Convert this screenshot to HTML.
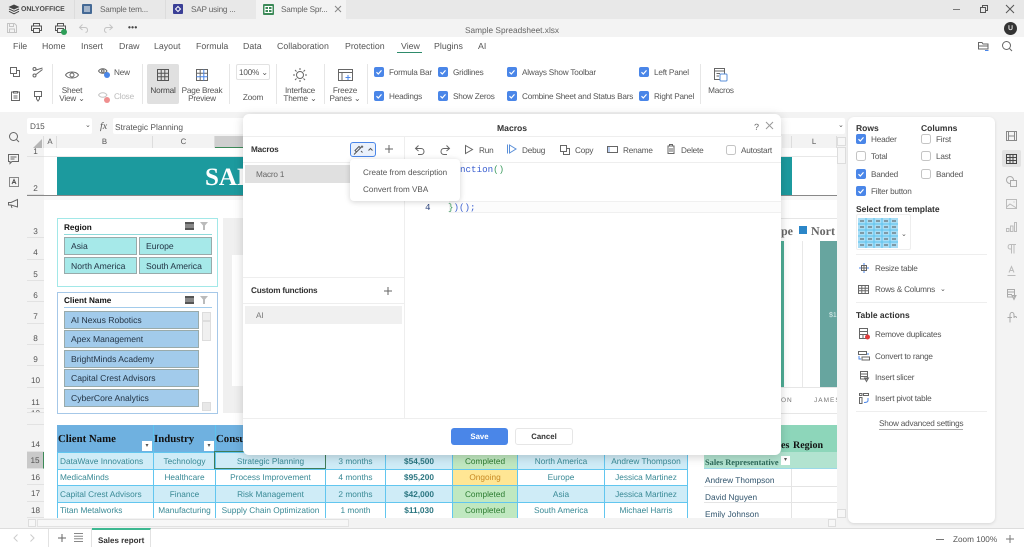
<!DOCTYPE html>
<html><head><meta charset="utf-8"><title>Sample Spreadsheet</title>
<style>
*{box-sizing:border-box}
html{background:#f3f3f3}
html,body{margin:0;padding:0;width:1024px;height:547px;overflow:hidden}
body{position:relative;background:#f3f3f3;font-family:"Liberation Sans",sans-serif;font-size:7.8px;color:#555;text-rendering:geometricPrecision;filter:blur(.3px)}
.a,.t,svg.i{position:absolute}
.t{white-space:nowrap;line-height:12px;font-size:8.2px;letter-spacing:-.2px;margin-top:.5px}
[style*="font-size"]{letter-spacing:0}
.c{transform:translateX(-50%);text-align:center}
.b{font-weight:bold;color:#333}
.t.mn{font-size:8.8px;letter-spacing:0;margin-top:0}
.t.rp{font-size:8.5px;letter-spacing:0}
svg.i{fill:none;stroke:#666;stroke-width:1;overflow:visible}
svg.cb{position:absolute;width:10px;height:10px}
.s{font-family:"Liberation Serif",serif;font-weight:bold;color:#111}
.sl{position:absolute;border:1px solid #9aa;color:#234;font-size:8.6px;line-height:16px;padding-left:6px;white-space:nowrap}
.rn{position:absolute;left:27px;width:17px;text-align:center;color:#555;font-size:8.2px;border-bottom:1px solid #e2e2e2;background:#f3f3f3}
.ch{position:absolute;top:136px;height:12px;text-align:center;line-height:12px;color:#555;background:#f3f3f3;border-right:1px solid #ddd;font-size:7.8px}
table{position:absolute;left:57px;top:452px;border-collapse:collapse;table-layout:fixed;width:630px;font-size:8.3px;color:#3a8a96}
td{border:1px solid #62c6ef;height:16.5px;padding:0;text-align:center;white-space:nowrap;overflow:hidden}
tr.o td{background:#cfecf7}
tr td:first-child{text-align:left;padding-left:2px}
td.g{background:#c0e8c0!important;color:#2e7d32}
td.y{background:#ffe694!important;color:#c88a25}
td.m{font-weight:bold;color:#2a7580}
</style></head><body>
<svg width="0" height="0" style="position:absolute"><defs>
<symbol id="on" viewBox="0 0 10 10"><rect width="10" height="10" rx="2" fill="#4a86e8"/><path d="M2.5 5.2 4.3 7 7.5 3.4" stroke="#fff" stroke-width="1.2" fill="none"/></symbol>
<symbol id="off" viewBox="0 0 10 10"><rect x=".5" y=".5" width="9" height="9" rx="2" fill="#fff" stroke="#c4c4c4"/></symbol>
</defs></svg>

<!-- title bar -->
<div class="a" style="left:0;top:0;width:1024px;height:19px;background:#e8e8e8"></div>
<div class="a" style="left:256px;top:0;width:90px;height:19px;background:#f3f3f3"></div>
<div class="a" style="left:74px;top:0;width:1px;height:19px;background:#dcdcdc"></div>
<div class="a" style="left:165px;top:0;width:1px;height:19px;background:#dcdcdc"></div>
<svg class="i" style="left:8px;top:4px" width="12" height="11"><path d="M6 .5 11.5 3 6 5.5.5 3Z" fill="#444" stroke="none"/><path d="M1 5 6 7.3 11 5M1 7.3 6 9.8 11 7.3" stroke="#444"/></svg>
<span class="t" style="left:21px;top:3px;font-weight:bold;font-size:6.9px;color:#444">ONLYOFFICE</span>
<div class="a" style="left:82px;top:4px;width:10px;height:10px;background:#446995;border-radius:1px"></div>
<svg class="i" style="left:84px;top:6px" width="6" height="6"><path d="M0 1H6M0 3H6M0 5H6" stroke="#fff"/></svg>
<span class="t" style="left:100px;top:3px;color:#666">Sample tem...</span>
<div class="a" style="left:173px;top:4px;width:10px;height:10px;background:#3a3f96;border-radius:1px"></div>
<svg class="i" style="left:175px;top:6px" width="6" height="6"><path d="M3 .5 5.5 3 3 5.5.5 3Z" stroke="#fff"/></svg>
<span class="t" style="left:191px;top:3px;color:#666">SAP using ...</span>
<svg class="i" style="left:263px;top:4px" width="11" height="11"><rect width="11" height="11" rx="1" fill="#3c8a58" stroke="none"/><path d="M2 2.5H9V8.5H2ZM2 5.5H9M5.5 2.5V8.5" stroke="#fff"/></svg>
<span class="t" style="left:281px;top:3px;color:#666">Sample Spr...</span>
<svg class="i" style="left:335px;top:6px" width="6" height="6"><path d="M0 0 6 6M6 0 0 6" stroke="#888"/></svg>
<svg class="i" style="left:953px;top:9px" width="7" height="1"><path d="M0 .5H7" stroke="#777"/></svg>
<svg class="i" style="left:980px;top:5px" width="8" height="8"><path d="M.5 2.5H5.5V7.5H.5ZM2.5 2.5V.5H7.5V5.5H5.5" stroke="#555"/></svg>
<svg class="i" style="left:1006px;top:5px" width="8" height="8"><path d="M0 0 8 8M8 0 0 8" stroke="#555"/></svg>

<!-- quick access -->
<div class="a" style="left:0;top:19px;width:1024px;height:18px;background:#f3f3f3"></div>
<svg class="i" style="left:7px;top:23px" width="10" height="10"><path d="M.5.5H7.5L9.5 2.5V9.5H.5ZM2.5.5V3.5H6.5V.5M2.5 9.5V6H7.5V9.5" stroke="#c4c4c4"/></svg>
<svg class="i" style="left:31px;top:23px" width="11" height="10"><path d="M2.5 3V.5H8.5V3M2.5 7.5H.5V3H10.5V7.5H8.5M2.5 5.5H8.5V9.5H2.5Z" stroke="#555"/></svg>
<svg class="i" style="left:55px;top:23px" width="11" height="10"><path d="M2.5 3V.5H8.5V3M2.5 7.5H.5V3H10.5V7.5H8.5M2.5 5.5H8.5V9.5H2.5Z" stroke="#555"/></svg>
<div class="a" style="left:61px;top:29px;width:6px;height:6px;border-radius:50%;background:#2e9e58"></div>
<svg class="i" style="left:79px;top:24px" width="10" height="9"><path d="M3.5.5 .5 3.5 3.5 6M.5 3.5H6C9 3.5 9.5 8 6.5 8.5" stroke="#c4c4c4"/></svg>
<svg class="i" style="left:103px;top:24px" width="10" height="9"><path d="M6.5.5 9.5 3.5 6.5 6M9.5 3.5H4C1 3.5.5 8 3.5 8.5" stroke="#c4c4c4"/></svg>
<span class="t" style="left:128px;top:21px;font-weight:bold;color:#444;letter-spacing:.3px">•••</span>
<span class="t" style="left:465px;top:23px;color:#666;font-size:8.3px">Sample Spreadsheet.xlsx</span>
<div class="a" style="left:1004px;top:22px;width:13px;height:13px;border-radius:50%;background:#333;color:#ddd;font-size:7px;line-height:13px;text-align:center;font-weight:bold">U</div>

<!-- ribbon -->
<div class="a" style="left:0;top:37px;width:1024px;height:75px;background:#fff"></div>
<span class="t mn" style="left:13px;top:40px">File</span><span class="t mn" style="left:42px;top:40px">Home</span><span class="t mn" style="left:81px;top:40px">Insert</span><span class="t mn" style="left:119px;top:40px">Draw</span><span class="t mn" style="left:154px;top:40px">Layout</span><span class="t mn" style="left:196px;top:40px">Formula</span><span class="t mn" style="left:243px;top:40px">Data</span><span class="t mn" style="left:277px;top:40px">Collaboration</span><span class="t mn" style="left:345px;top:40px">Protection</span><span class="t mn" style="left:401px;top:40px">View</span><span class="t mn" style="left:434px;top:40px">Plugins</span><span class="t mn" style="left:478px;top:40px">AI</span>
<div class="a" style="left:397px;top:52px;width:25px;height:1px;background:#2e8b6b"></div>
<svg class="i" style="left:978px;top:41px" width="11" height="11"><path d="M.5 1.5H4L5 3H10V8H.5ZM.5 5H10" stroke="#666"/><path d="M7 9.5H10.5" stroke="#4a86e8"/></svg>
<svg class="i" style="left:1002px;top:41px" width="10" height="10"><circle cx="4.5" cy="4.5" r="4"/><path d="M7.5 7.5 10 10"/></svg>
<div class="a" style="left:52px;top:64px;width:1px;height:40px;background:#e6e6e6"></div><div class="a" style="left:142px;top:64px;width:1px;height:40px;background:#e6e6e6"></div><div class="a" style="left:229px;top:64px;width:1px;height:40px;background:#e6e6e6"></div><div class="a" style="left:276px;top:64px;width:1px;height:40px;background:#e6e6e6"></div><div class="a" style="left:324px;top:64px;width:1px;height:40px;background:#e6e6e6"></div><div class="a" style="left:367px;top:64px;width:1px;height:40px;background:#e6e6e6"></div><div class="a" style="left:700px;top:64px;width:1px;height:40px;background:#e6e6e6"></div>
<svg class="i" style="left:10px;top:67px" width="10" height="10"><path d="M.5.5H6.5V6.5H.5ZM3.5 6.5V9.5H9.5V3.5H6.5"/></svg>
<svg class="i" style="left:32px;top:67px" width="11" height="11"><circle cx="2.5" cy="2" r="1.5"/><circle cx="2.5" cy="8.5" r="1.5"/><path d="M4 3 10.5 1M4 7.5 10.5 2.5"/></svg>
<svg class="i" style="left:11px;top:91px" width="9" height="10"><path d="M2.5 1H.5V9.5H8.5V1H6.5M2.5.5H6.5V2H2.5ZM2.5 5H6.5M2.5 7H6.5"/></svg>
<svg class="i" style="left:34px;top:91px" width="8" height="11"><path d="M.5.5H7.5V5.5H.5ZM2.5 5.5V8L4 10 5.5 8V5.5"/></svg>
<svg class="i" style="left:65px;top:70px" width="14" height="10"><path d="M.5 5C3 1 11 1 13.5 5 11 9 3 9 .5 5Z"/><circle cx="7" cy="5" r="2"/></svg>
<span class="t c" style="left:72px;top:84px">Sheet</span><span class="t c" style="left:72px;top:92px">View ⌄</span>
<svg class="i" style="left:98px;top:67px" width="10" height="8"><path d="M.5 4C2.5 1 7 1 9 4 7 7 2.5 7 .5 4Z"/><circle cx="4.8" cy="4" r="1.3"/></svg>
<div class="a" style="left:104px;top:72px;width:6px;height:6px;border-radius:50%;background:#4a86e8"></div>
<span class="t" style="left:114px;top:66px">New</span>
<svg class="i" style="left:98px;top:91px" width="10" height="8"><path d="M.5 4C2.5 1 7 1 9 4 7 7 2.5 7 .5 4Z" stroke="#c4c4c4"/></svg>
<div class="a" style="left:104px;top:97px;width:6px;height:6px;border-radius:50%;background:#ef8f8f"></div>
<span class="t" style="left:114px;top:90px;color:#bbb">Close</span>
<div class="a" style="left:147px;top:64px;width:32px;height:40px;background:#e0e0e0;border-radius:2px"></div>
<svg class="i" style="left:157px;top:69px" width="12" height="12"><path d="M.5.5H11.5V11.5H.5ZM.5 4.2H11.5M.5 7.8H11.5M4.2.5V11.5M7.8.5V11.5" stroke="#555"/></svg>
<span class="t c" style="left:163px;top:84px;color:#444">Normal</span>
<svg class="i" style="left:196px;top:69px" width="12" height="12"><path d="M.5.5H11.5V11.5H.5ZM.5 4.2H11.5M4.2.5V11.5"/><path d="M.5 7.8H11.5M7.8.5V11.5" stroke="#4a86e8"/></svg>
<span class="t c" style="left:202px;top:84px">Page Break</span><span class="t c" style="left:202px;top:92px">Preview</span>
<div class="a" style="left:236px;top:64px;width:34px;height:16px;border:1px solid #e2e2e2;border-radius:2px"></div>
<span class="t" style="left:239px;top:66px">100% ⌄</span>
<span class="t c" style="left:253px;top:91px">Zoom</span>
<svg class="i" style="left:293px;top:68px" width="14" height="14"><circle cx="7" cy="7" r="3.5"/><path d="M7 0V2M7 12V14M0 7H2M12 7H14M2 2 3.5 3.5M12 2 10.5 3.5M2 12 3.5 10.5M12 12 10.5 10.5"/></svg>
<span class="t c" style="left:300px;top:84px">Interface</span><span class="t c" style="left:300px;top:92px">Theme ⌄</span>
<svg class="i" style="left:338px;top:69px" width="15" height="12"><rect x=".5" y=".5" width="14" height="11" fill="#fff"/><path d="M.5 3.5H14.5M4 3.5V11.5"/><path d="M10 6V11M7.5 8.5H12.5" stroke="#4a86e8"/></svg>
<span class="t c" style="left:345px;top:84px">Freeze</span><span class="t c" style="left:345px;top:92px">Panes ⌄</span>
<svg class="cb" style="left:374px;top:67px"><use href="#on"/></svg><span class="t" style="left:389px;top:66px">Formula Bar</span>
<svg class="cb" style="left:438px;top:67px"><use href="#on"/></svg><span class="t" style="left:453px;top:66px">Gridlines</span>
<svg class="cb" style="left:507px;top:67px"><use href="#on"/></svg><span class="t" style="left:522px;top:66px">Always Show Toolbar</span>
<svg class="cb" style="left:639px;top:67px"><use href="#on"/></svg><span class="t" style="left:654px;top:66px">Left Panel</span>
<svg class="cb" style="left:374px;top:91px"><use href="#on"/></svg><span class="t" style="left:389px;top:90px">Headings</span>
<svg class="cb" style="left:438px;top:91px"><use href="#on"/></svg><span class="t" style="left:453px;top:90px">Show Zeros</span>
<svg class="cb" style="left:507px;top:91px"><use href="#on"/></svg><span class="t" style="left:522px;top:90px">Combine Sheet and Status Bars</span>
<svg class="cb" style="left:639px;top:91px"><use href="#on"/></svg><span class="t" style="left:654px;top:90px">Right Panel</span>
<svg class="i" style="left:714px;top:68px" width="15" height="14"><path d="M.5.5H10.5V11.5H.5ZM.5 3H10.5M2.5 5.5H6M2.5 8H5"/><rect x="6" y="6" width="7" height="7" rx="1" fill="#fff" stroke="#5a8fd8"/></svg>
<span class="t c" style="left:721px;top:84px">Macros</span>

<!-- formula bar -->
<div class="a" style="left:27px;top:118px;width:65px;height:16px;background:#fff;border-radius:2px"></div>
<span class="t" style="left:30px;top:120px">D15</span><span class="t" style="left:85px;top:119px;font-size:7px">⌄</span>
<span class="t" style="left:100px;top:120px;font-family:'Liberation Serif',serif;font-style:italic;font-size:10px">fx</span>
<div class="a" style="left:113px;top:118px;width:732px;height:16px;background:#fff;border-radius:2px"></div>
<span class="t" style="left:115px;top:120px;font-size:8.4px">Strategic Planning</span>
<span class="t" style="left:838px;top:119px;font-size:7px">⌄</span>

<!-- left sidebar -->
<svg class="i" style="left:9px;top:132px" width="10" height="10"><circle cx="4.5" cy="4.5" r="4"/><path d="M7.5 7.5 10 10"/></svg>
<svg class="i" style="left:8px;top:154px" width="11" height="10"><path d="M.5.5H10.5V7.5H4L2 9.5V7.5H.5ZM2.5 3H8.5M2.5 5H6.5"/></svg>
<svg class="i" style="left:9px;top:177px" width="10" height="10"><path d="M.5.5H9.5V9.5H.5Z" stroke="#888"/><path d="M3 7 5 2.5 7 7M3.8 5.5H6.2" stroke="#555"/></svg>
<svg class="i" style="left:8px;top:199px" width="11" height="10"><path d="M.5 3.5H3L9.5.5V8L3 6H.5ZM3 6 4 9"/></svg>

<!-- sheet -->
<div class="a" style="left:27px;top:136px;width:810px;height:382px;background:#fff"></div>
<div class="ch" style="left:27px;width:17px"></div>
<svg class="i" style="left:33px;top:139px" width="9" height="9"><path d="M9 0V9H0Z" fill="#b5b5b5" stroke="none"/></svg>
<div class="ch" style="left:44px;width:13px">A</div><div class="ch" style="left:57px;width:96px">B</div><div class="ch" style="left:153px;width:62px">C</div><div class="ch" style="left:215px;width:110px;background:#cfcfcf;border-bottom:1px solid #3c8a58"></div>
<div class="ch" style="left:782px;width:10px"></div><div class="ch" style="left:792px;width:45px">L</div>
<div class="rn" style="top:148px;height:9px;line-height:8px">1</div>
<div class="rn" style="top:157px;height:38px;padding-top:26px;line-height:11px">2</div>
<div class="a" style="left:44px;top:148px;width:793px;height:9px;border-bottom:1px solid #e8e8e8"></div>
<div class="a" style="left:57px;top:157px;width:735px;height:38px;background:#1c9a9e"></div>
<span class="t s" style="left:205px;top:163px;font-size:25px;line-height:28px;color:#fff">SALES</span>
<div class="a" style="left:27px;top:195px;width:810px;height:1px;background:#888"></div>
<div class="a" style="left:27px;top:196px;width:810px;height:4px;background:#f3f3f3;opacity:.7"></div>
<div class="a" style="left:27px;top:196px;width:17px;height:42px;background:#f3f3f3"></div>
<div class="rn" style="top:220px;height:18px;line-height:24px">3</div>
<div class="rn" style="top:238px;height:22px;line-height:30px">4</div>
<div class="rn" style="top:260px;height:21px;line-height:30px">5</div>
<div class="rn" style="top:281px;height:21px;line-height:30px">6</div>
<div class="rn" style="top:302px;height:22px;line-height:30px">7</div>
<div class="rn" style="top:324px;height:21px;line-height:30px">8</div>
<div class="rn" style="top:345px;height:21px;line-height:30px">9</div>
<div class="rn" style="top:366px;height:22px;line-height:30px">10</div>
<div class="rn" style="top:388px;height:21px;line-height:30px">11</div>
<div class="rn" style="top:409px;height:4px;line-height:10px;overflow:hidden">12</div>
<div class="rn" style="top:413px;height:12px"></div>
<div class="rn" style="top:425px;height:27px;padding-top:14px;line-height:12px">14</div>
<div class="rn" style="top:452px;height:17px;line-height:17px;background:#c9c9c9;border-right:1px solid #3c8a58">15</div>
<div class="rn" style="top:469px;height:16px;line-height:18px">16</div>
<div class="rn" style="top:485px;height:17px;line-height:18px">17</div>
<div class="rn" style="top:502px;height:16px;line-height:18px">18</div>

<!-- slicers -->
<div class="a" style="left:57px;top:218px;width:161px;height:69px;border:1px solid #a2e8e8;background:#fff"></div>
<span class="t b" style="left:64px;top:221px;color:#111;font-size:8.2px">Region</span>
<div class="a" style="left:64px;top:234px;width:148px;height:1px;background:#8fdada"></div>
<div class="a" style="left:185px;top:222px;width:9px;height:8px;border-top:2px solid #555;border-bottom:2px solid #555;background:#888"></div>
<svg class="i" style="left:200px;top:222px" width="9" height="8"><path d="M0 0H8L5 3.5V8H3V3.5Z" fill="#bbb" stroke="none"/></svg>
<div class="sl" style="left:64px;top:237px;width:73px;height:18px;background:#a6e9e9">Asia</div>
<div class="sl" style="left:139px;top:237px;width:73px;height:18px;background:#a6e9e9">Europe</div>
<div class="sl" style="left:64px;top:257px;width:73px;height:17px;background:#a6e9e9">North America</div>
<div class="sl" style="left:139px;top:257px;width:73px;height:17px;background:#a6e9e9">South America</div>
<div class="a" style="left:57px;top:292px;width:161px;height:122px;border:1px solid #a6c8e8;background:#fff"></div>
<span class="t b" style="left:64px;top:294px;color:#111;font-size:8.2px">Client Name</span>
<div class="a" style="left:64px;top:307px;width:148px;height:1px;background:#a2cbeb"></div>
<div class="a" style="left:185px;top:296px;width:9px;height:8px;border-top:2px solid #555;border-bottom:2px solid #555;background:#888"></div>
<svg class="i" style="left:200px;top:296px" width="9" height="8"><path d="M0 0H8L5 3.5V8H3V3.5Z" fill="#bbb" stroke="none"/></svg>
<div class="sl" style="left:64px;top:311px;width:135px;height:18px;background:#a2cbeb">AI Nexus Robotics</div>
<div class="sl" style="left:64px;top:330px;width:135px;height:18px;background:#a2cbeb">Apex Management</div>
<div class="sl" style="left:64px;top:350px;width:135px;height:18px;background:#a2cbeb">BrightMinds Academy</div>
<div class="sl" style="left:64px;top:369px;width:135px;height:18px;background:#a2cbeb">Capital Crest Advisors</div>
<div class="sl" style="left:64px;top:389px;width:135px;height:18px;background:#a2cbeb">CyberCore Analytics</div>
<div class="a" style="left:202px;top:312px;width:9px;height:9px;background:#eee;border:1px solid #ddd"></div>
<div class="a" style="left:202px;top:321px;width:9px;height:20px;background:#f0f0f0;border:1px solid #ddd"></div>
<div class="a" style="left:202px;top:402px;width:9px;height:9px;background:#e8e8e8;border:1px solid #ddd"></div>

<!-- chart behind dialog -->
<div class="a" style="left:223px;top:218px;width:20px;height:195px;background:#f0f0f0"></div>
<div class="a" style="left:232px;top:255px;width:12px;height:131px;background:#fff"></div>
<div class="a" style="left:781px;top:218px;width:56px;height:1px;background:#e6e6e6"></div>
<span class="t s" style="left:781px;top:223px;font-size:12px;line-height:14px;color:#666">pe</span>
<div class="a" style="left:799px;top:226px;width:8px;height:8px;background:#2b86c8"></div>
<span class="t s" style="left:811px;top:223px;font-size:12px;line-height:14px;color:#666">Nort</span>
<div class="a" style="left:781px;top:241px;width:3px;height:146px;background:#4fae96"></div>
<div class="a" style="left:802px;top:241px;width:1px;height:146px;background:#e8e8e8"></div>
<div class="a" style="left:820px;top:241px;width:17px;height:146px;background:#67a59f"></div>
<span class="t" style="left:829px;top:309px;color:#dfeeee;font-size:7px">$1</span>
<div class="a" style="left:781px;top:387px;width:56px;height:1px;background:#e6e6e6"></div>
<span class="t" style="left:781px;top:394px;font-size:6.5px;letter-spacing:1px;color:#777">ON</span>
<span class="t" style="left:814px;top:394px;font-size:6.5px;letter-spacing:1px;color:#777;width:23px;overflow:hidden">JAMES</span>
<div class="a" style="left:781px;top:413px;width:56px;height:1px;background:#e6e6e6"></div>

<!-- data table -->
<div class="a" style="left:57px;top:425px;width:186px;height:27px;background:#6fb1e0"></div>
<div class="a" style="left:153px;top:425px;width:1px;height:27px;background:#5cc4ee"></div>
<div class="a" style="left:215px;top:425px;width:1px;height:27px;background:#5cc4ee"></div>
<span class="t s" style="left:58px;top:432px;font-size:10.8px">Client Name</span>
<span class="t s" style="left:154px;top:432px;font-size:10.8px">Industry</span>
<span class="t s" style="left:216px;top:432px;font-size:10.8px">Consulting</span>
<div class="a" style="left:142px;top:441px;width:10px;height:10px;background:#fff;color:#555;font-size:6px;line-height:10px;text-align:center">▾</div>
<div class="a" style="left:204px;top:441px;width:10px;height:10px;background:#fff;color:#555;font-size:6px;line-height:10px;text-align:center">▾</div>
<table><colgroup><col style="width:96px"><col style="width:62px"><col style="width:110px"><col style="width:60px"><col style="width:67px"><col style="width:65px"><col style="width:87px"><col style="width:83px"></colgroup>
<tr class="o"><td>DataWave Innovations</td><td>Technology</td><td>Strategic Planning</td><td>3 months</td><td class="m">$54,500</td><td class="g">Completed</td><td>North America</td><td>Andrew Thompson</td></tr>
<tr><td>MedicaMinds</td><td>Healthcare</td><td>Process Improvement</td><td>4 months</td><td class="m">$95,200</td><td class="y">Ongoing</td><td>Europe</td><td>Jessica Martinez</td></tr>
<tr class="o"><td>Capital Crest Advisors</td><td>Finance</td><td>Risk Management</td><td>2 months</td><td class="m">$42,000</td><td class="g">Completed</td><td>Asia</td><td>Jessica Martinez</td></tr>
<tr><td>Titan Metalworks</td><td>Manufacturing</td><td>Supply Chain Optimization</td><td>1 month</td><td class="m">$11,030</td><td class="g">Completed</td><td>South America</td><td>Michael Harris</td></tr>
</table>
<div class="a" style="left:214px;top:451px;width:112px;height:18px;border:1px solid #3f7d5a"></div>

<!-- pivot -->
<div class="a" style="left:704px;top:425px;width:133px;height:27px;background:#8dd6ba"></div>
<span class="t s" style="left:781px;top:439px;font-size:10px">es</span><span class="t s" style="left:793px;top:439px;font-size:10px">Region</span>
<div class="a" style="left:704px;top:452px;width:133px;height:17px;background:#b2e3d0;border-bottom:1px solid #9bd8e8"></div>
<span class="t s" style="left:705px;top:456px;font-size:8.4px;color:#2d6a5a;width:76px;overflow:hidden">Sales Representative</span>
<div class="a" style="left:781px;top:456px;width:9px;height:9px;background:#fff;color:#555;font-size:6px;line-height:9px;text-align:center">▾</div>
<div class="a" style="left:791px;top:469px;width:1px;height:49px;background:#e4e4e4"></div>
<span class="t" style="left:705px;top:473px;color:#33566e;font-size:8.3px">Andrew Thompson</span>
<div class="a" style="left:704px;top:486px;width:133px;height:1px;background:#e4e4e4"></div>
<span class="t" style="left:705px;top:490px;color:#33566e;font-size:8.3px">David Nguyen</span>
<div class="a" style="left:704px;top:502px;width:133px;height:1px;background:#e4e4e4"></div>
<span class="t" style="left:705px;top:507px;color:#33566e;font-size:8.3px">Emily Johnson</span>

<!-- scrollbars -->
<div class="a" style="left:837px;top:136px;width:9px;height:382px;background:#f3f3f3"></div>
<div class="a" style="left:837px;top:137px;width:9px;height:9px;background:#f7f7f7;border:1px solid #ddd"></div>
<div class="a" style="left:837px;top:147px;width:9px;height:17px;background:#f7f7f7;border:1px solid #ddd"></div>
<div class="a" style="left:837px;top:509px;width:9px;height:9px;background:#f7f7f7;border:1px solid #ddd"></div>
<div class="a" style="left:27px;top:518px;width:819px;height:10px;background:#f3f3f3"></div>
<div class="a" style="left:28px;top:519px;width:8px;height:8px;background:#f7f7f7;border:1px solid #ddd"></div>
<div class="a" style="left:37px;top:519px;width:312px;height:8px;background:#f7f7f7;border:1px solid #e2e2e2"></div>
<div class="a" style="left:828px;top:519px;width:8px;height:8px;background:#f7f7f7;border:1px solid #ddd"></div>

<!-- status bar -->
<div class="a" style="left:0;top:528px;width:1024px;height:19px;background:#fff;border-top:1px solid #ddd"></div>
<svg class="i" style="left:13px;top:534px" width="5" height="8"><path d="M4.5.5 1 4 4.5 7.5" stroke="#ccc"/></svg>
<svg class="i" style="left:30px;top:534px" width="5" height="8"><path d="M.5.5 4 4 .5 7.5" stroke="#ccc"/></svg>
<div class="a" style="left:48px;top:529px;width:1px;height:18px;background:#e2e2e2"></div>
<svg class="i" style="left:58px;top:534px" width="8" height="8"><path d="M4 0V8M0 4H8" stroke="#666"/></svg>
<svg class="i" style="left:74px;top:533px" width="9" height="9"><path d="M0 .5H9M0 3.2H9M0 5.8H9M0 8.5H9" stroke="#888"/></svg>
<div class="a" style="left:91px;top:529px;width:1px;height:18px;background:#e2e2e2"></div>
<div class="a" style="left:92px;top:528px;width:59px;height:19px;background:#fff;border-top:2px solid #3db891;border-right:1px solid #e2e2e2"></div>
<span class="t b" style="left:98px;top:534px;font-size:8px">Sales report</span>
<svg class="i" style="left:936px;top:539px" width="8" height="1"><path d="M0 .5H8" stroke="#777"/></svg>
<span class="t" style="left:953px;top:533px;font-size:8.2px">Zoom 100%</span>
<svg class="i" style="left:1006px;top:535px" width="8" height="8"><path d="M4 0V8M0 4H8" stroke="#777"/></svg>

<!-- right panel -->
<div class="a" style="left:848px;top:117px;width:147px;height:406px;background:#fff;border-radius:6px;box-shadow:0 1px 3px rgba(0,0,0,.12)"></div>
<span class="t b rp" style="left:856px;top:121px">Rows</span><span class="t b rp" style="left:921px;top:121px">Columns</span>
<svg class="cb" style="left:856px;top:134px"><use href="#on"/></svg><span class="t" style="left:871px;top:133px">Header</span>
<svg class="cb" style="left:856px;top:151px"><use href="#off"/></svg><span class="t" style="left:871px;top:150px">Total</span>
<svg class="cb" style="left:856px;top:169px"><use href="#on"/></svg><span class="t" style="left:871px;top:168px">Banded</span>
<svg class="cb" style="left:856px;top:186px"><use href="#on"/></svg><span class="t" style="left:871px;top:185px">Filter button</span>
<svg class="cb" style="left:921px;top:134px"><use href="#off"/></svg><span class="t" style="left:936px;top:133px">First</span>
<svg class="cb" style="left:921px;top:151px"><use href="#off"/></svg><span class="t" style="left:936px;top:150px">Last</span>
<svg class="cb" style="left:921px;top:169px"><use href="#off"/></svg><span class="t" style="left:936px;top:168px">Banded</span>
<span class="t b rp" style="left:856px;top:202px">Select from template</span>
<div class="a" style="left:856px;top:214px;width:55px;height:36px;border:1px solid #eee;border-radius:2px"></div>
<svg class="i" style="left:858px;top:218px" width="40" height="30"><rect width="40" height="30" fill="#a9ddf5" stroke="none"/><path d="M8 0V30M16 0V30M24 0V30M32 0V30M0 6H40M0 12H40M0 18H40M0 24H40" stroke="#5cc4ee"/><path d="M2 3H6M10 3H14M18 3H22M26 3H30M34 3H38M2 9H6M10 9H14M18 9H22M26 9H30M34 9H38M2 15H6M10 15H14M18 15H22M26 15H30M34 15H38M2 21H6M10 21H14M18 21H22M26 21H30M34 21H38M2 27H6M10 27H14M18 27H22M26 27H30M34 27H38" stroke="#555"/></svg>
<span class="t" style="left:901px;top:228px;font-size:7px">⌄</span>
<div class="a" style="left:856px;top:254px;width:131px;height:1px;background:#eee"></div>
<svg class="i" style="left:859px;top:263px" width="10" height="10"><path d="M2.5 2.5H7.5V7.5H2.5ZM2.5 5H7.5M5 2.5V7.5" stroke="#666"/><path d="M5 0V2M5 8V10M0 5H2M8 5H10" stroke="#4a86e8"/></svg>
<span class="t" style="left:875px;top:262px">Resize table</span>
<svg class="i" style="left:858px;top:285px" width="11" height="9"><path d="M.5.5H10.5V8.5H.5ZM.5 3.2H10.5M.5 5.8H10.5M3.8.5V8.5M7.2.5V8.5"/></svg>
<span class="t" style="left:875px;top:283px">Rows &amp; Columns</span><span class="t" style="left:940px;top:283px;font-size:7px">⌄</span>
<div class="a" style="left:856px;top:302px;width:131px;height:1px;background:#eee"></div>
<span class="t b rp" style="left:856px;top:308px">Table actions</span>
<svg class="i" style="left:859px;top:328px" width="11" height="12"><path d="M.5.5H8.5V10.5H.5ZM.5 3.5H8.5M.5 6.5H8.5M4 6.5V10.5"/><circle cx="8.5" cy="9" r="2.5" fill="#e03c3c" stroke="none"/></svg>
<span class="t" style="left:875px;top:328px">Remove duplicates</span>
<svg class="i" style="left:858px;top:351px" width="12" height="10"><path d="M.5.5H8.5V3.5H.5ZM4 6H11.5V9H4Z"/><path d="M1 5V8H3M10 4V2" stroke="#4a86e8"/></svg>
<span class="t" style="left:875px;top:350px">Convert to range</span>
<svg class="i" style="left:860px;top:371px" width="9" height="11"><path d="M.5.5H7.5V8H.5ZM.5 3H7.5M.5 5.5H7.5M4.5 7 6.5 10.5 8.5 7Z"/></svg>
<span class="t" style="left:875px;top:371px">Insert slicer</span>
<svg class="i" style="left:859px;top:393px" width="10" height="11"><path d="M.5.5H3V2.5H.5ZM4.5.5H9.5V2.5H4.5ZM.5 4.5H3V10.5H.5Z"/><path d="M9 5V7.5C9 9 7.5 9.5 5 9.5" stroke="#4a86e8"/></svg>
<span class="t" style="left:875px;top:392px">Insert pivot table</span>
<div class="a" style="left:856px;top:411px;width:131px;height:1px;background:#eee"></div>
<span class="t" style="left:879px;top:417px;border-bottom:1px solid #aaa;line-height:11px">Show advanced settings</span>

<!-- right icons -->
<div class="a" style="left:1002px;top:150px;width:19px;height:17px;background:#e2e2e2;border-radius:2px"></div>
<svg class="i" style="left:1006px;top:131px" width="11" height="10"><path d="M.5.5H10.5V9.5H.5ZM2.5.5V9.5M8.5.5V9.5M2.5 5H8.5" stroke="#888"/></svg>
<svg class="i" style="left:1006px;top:154px" width="11" height="10"><path d="M.5.5H10.5V9.5H.5ZM.5 3.5H10.5M.5 6.5H10.5M4 .5V9.5M7 .5V9.5" stroke="#444"/></svg>
<svg class="i" style="left:1006px;top:176px" width="11" height="11"><circle cx="4" cy="4" r="3.5" stroke="#aaa"/><rect x="4.5" y="4.5" width="6" height="6" fill="#f3f3f3" stroke="#aaa"/></svg>
<svg class="i" style="left:1006px;top:199px" width="11" height="10"><path d="M.5.5H10.5V9.5H.5ZM.5 8 4 5 10.5 9M7.5 3H8.5" stroke="#bbb"/></svg>
<svg class="i" style="left:1006px;top:222px" width="11" height="10"><path d="M.5 6.5H3V9.5H.5ZM4.5 4H7V9.5H4.5ZM8.5 .5H10.5V9.5H8.5Z" stroke="#bbb"/></svg>
<svg class="i" style="left:1007px;top:244px" width="9" height="10"><path d="M9 .5H3C.5.5.5 5 3 5H4.5M4.5.5V9.5M7 .5V9.5" stroke="#bbb"/></svg>
<svg class="i" style="left:1007px;top:266px" width="9" height="11"><path d="M2 6.5 4.5.5 7 6.5M3 4.5H6M.5 9.5H8.5" stroke="#bbb"/></svg>
<svg class="i" style="left:1007px;top:289px" width="10" height="11"><path d="M.5.5H7.5V8H.5ZM.5 3H7.5M.5 5.5H5M5 6.5 7 10.5 9 6.5Z" stroke="#aaa"/></svg>
<svg class="i" style="left:1007px;top:312px" width="10" height="11"><path d="M3 10.5V3C3-.5 7-.5 7 3V6C7 4 9.5 4 9.5 6M.5 5.5H5" stroke="#aaa"/></svg>

<!-- dialog -->
<div class="a" style="left:243px;top:114px;width:538px;height:341px;background:#fff;border-radius:6px;box-shadow:0 2px 10px rgba(0,0,0,.18)"></div>
<span class="t b" style="left:497px;top:121px;font-size:8.6px">Macros</span>
<span class="t" style="left:754px;top:120px;font-size:9px;color:#666">?</span>
<svg class="i" style="left:766px;top:122px" width="7" height="7"><path d="M0 0 7 7M7 0 0 7" stroke="#999"/></svg>
<div class="a" style="left:243px;top:136px;width:538px;height:1px;background:#eee"></div>
<div class="a" style="left:243px;top:162px;width:538px;height:1px;background:#eee"></div>
<div class="a" style="left:404px;top:137px;width:1px;height:281px;background:#eee"></div>
<div class="a" style="left:243px;top:418px;width:538px;height:1px;background:#eee"></div>
<span class="t b" style="left:251px;top:143px">Macros</span>
<div class="a" style="left:350px;top:142px;width:26px;height:15px;border:1px solid #4a86e8;border-radius:3px;background:#eaf1fc"></div>
<svg class="i" style="left:353px;top:145px" width="11" height="10"><path d="M1 9.5 8 2.5M3.5 7 2 5.5 6 1.5 7.5 3M8 6 9.5 7.5M9 .5V3M7.8 1.8H10.2" stroke="#555"/></svg>
<svg class="i" style="left:368px;top:148px" width="5" height="3"><path d="M.5 2.5 2.5.5 4.5 2.5" stroke="#555"/></svg>
<svg class="i" style="left:385px;top:145px" width="8" height="8"><path d="M4 0V8M0 4H8" stroke="#666"/></svg>
<div class="a" style="left:245px;top:165px;width:159px;height:18px;background:#e0e0e0"></div>
<span class="t" style="left:256px;top:168px;color:#666">Macro 1</span>
<span class="t b" style="left:251px;top:284px">Custom functions</span>
<svg class="i" style="left:384px;top:287px" width="8" height="8"><path d="M4 0V8M0 4H8" stroke="#666"/></svg>
<div class="a" style="left:243px;top:277px;width:161px;height:1px;background:#eee"></div>
<div class="a" style="left:243px;top:303px;width:161px;height:1px;background:#eee"></div>
<div class="a" style="left:245px;top:306px;width:157px;height:18px;background:#f0f0f0"></div>
<span class="t" style="left:256px;top:309px;color:#777">AI</span>
<svg class="i" style="left:415px;top:145px" width="10" height="10"><path d="M3.5.5 .5 3.5 3.5 6M.5 3.5H6C10 3.5 10 9.5 6 9.5H3"/></svg>
<svg class="i" style="left:440px;top:145px" width="10" height="10"><path d="M6.5.5 9.5 3.5 6.5 6M9.5 3.5H4C0 3.5 0 9.5 4 9.5H7"/></svg>
<svg class="i" style="left:465px;top:145px" width="8" height="9"><path d="M.5.5 7.5 4.5.5 8.5Z"/></svg>
<span class="t" style="left:479px;top:144px">Run</span>
<svg class="i" style="left:507px;top:144px" width="10" height="10"><path d="M.5.5V9.5" stroke="#5a8fd8"/><path d="M2.5 1 9 5 2.5 9Z" stroke="#5a8fd8"/></svg>
<span class="t" style="left:522px;top:144px">Debug</span>
<svg class="i" style="left:560px;top:145px" width="10" height="10"><path d="M.5.5H6.5V6.5H.5ZM3.5 6.5V9.5H9.5V3.5H6.5"/></svg>
<span class="t" style="left:575px;top:144px">Copy</span>
<svg class="i" style="left:607px;top:146px" width="11" height="7"><path d="M.5.5H10.5V6.5H.5Z"/><rect x="1" y="1" width="2" height="5" fill="#b9cdf0" stroke="none"/></svg>
<span class="t" style="left:623px;top:144px">Rename</span>
<svg class="i" style="left:667px;top:144px" width="8" height="10"><path d="M.5 2H7.5M2.5 2V.5H5.5V2M1 2V9.5H7V2M3 4V8M5 4V8"/></svg>
<span class="t" style="left:681px;top:144px">Delete</span>
<svg class="cb" style="left:726px;top:145px"><use href="#off"/></svg>
<span class="t" style="left:741px;top:144px">Autostart</span>

<span class="t" style="left:449px;top:163px;font-family:'Liberation Mono',monospace;font-size:9.2px;color:#3a5fd0">function<span style="color:#3a9a5c">()</span></span>
<div class="a" style="left:449px;top:201px;width:332px;height:12px;background:#fcfcfc;border:1px solid #f0f0f0;border-right:0"></div>
<span class="t" style="left:425px;top:201px;font-family:'Liberation Mono',monospace;font-size:9.2px;color:#334a80">4</span>
<span class="t" style="left:448px;top:201px;font-family:'Liberation Mono',monospace;font-size:9.2px;color:#3a5fd0"><span style="color:#3a9a5c">}</span>)();</span>

<!-- popup -->
<div class="a" style="left:350px;top:159px;width:110px;height:42px;background:#fff;border-radius:4px;box-shadow:0 1px 6px rgba(0,0,0,.18)"></div>
<span class="t" style="left:363px;top:166px;font-size:8.1px">Create from description</span>
<span class="t" style="left:363px;top:183px;font-size:8.1px">Convert from VBA</span>

<div class="a" style="left:451px;top:428px;width:57px;height:17px;background:#4a86e8;border-radius:3px;color:#fff;font-weight:bold;text-align:center;line-height:17px">Save</div>
<div class="a" style="left:515px;top:428px;width:58px;height:17px;background:#fff;border:1px solid #e6e6e6;border-radius:3px;color:#333;font-weight:bold;text-align:center;line-height:15px">Cancel</div>
</body></html>
